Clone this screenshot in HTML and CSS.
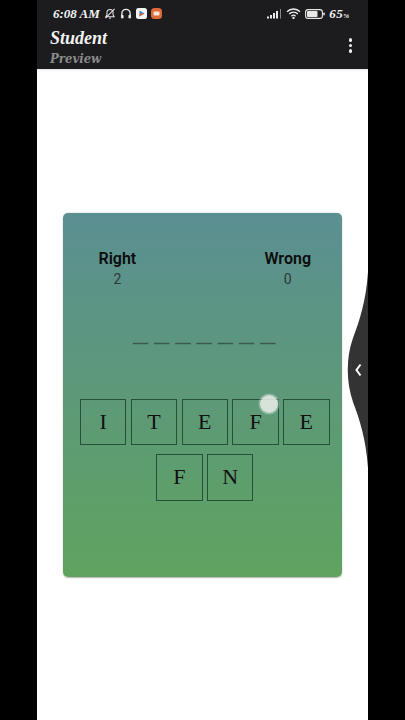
FILE: index.html
```html
<!DOCTYPE html>
<html lang="en">
<head>
<meta charset="utf-8">
<title>Student Preview</title>
<link rel="stylesheet" href="styles.css">
</head>
<body>
<div class="phone">
  <header class="appbar">
    <div class="status">
      <div class="status-left">
        <span class="time">6:08 AM</span>
        <svg class="ic" width="12" height="13" viewBox="0 0 13 13" fill="none" stroke="#e8e8e8" stroke-width="1.1"><path d="M2 10h9L9.8 8V5.500a3.300 3.300 0 0 0-6.600 0V8z"/><path d="M5.400 11.500h2.200"/><path d="M1.500 11.500 11.500 1.500"/></svg>
        <svg class="ic" width="12" height="13" viewBox="0 0 13 13" fill="none" stroke="#f0f0f0" stroke-width="1.400"><path d="M2 10V6.500a4.500 4.500 0 0 1 9 0V10"/><path d="M1.500 8.500v3h2v-3zM9.500 8.500v3h2v-3z" fill="#f0f0f0" stroke-width=".6"/></svg>
        <svg class="ic" width="11" height="11" viewBox="0 0 11 11"><rect width="11" height="11" rx="2.500" fill="#f4f4f4"/><path d="M3.500 2.500 8.500 5.500 3.500 8.500z" fill="#3b82d6"/><path d="M3.500 5.500h5l-5 3z" fill="#e2672f"/></svg>
        <svg class="ic" width="11" height="11" viewBox="0 0 11 11"><rect width="11" height="11" rx="3.500" fill="#dd6a37"/><rect x="2.500" y="3.500" width="6" height="4" rx="1" fill="#f6e4d8"/></svg>
      </div>
      <div class="status-right">
        <svg width="15" height="10" viewBox="0 0 15 10" fill="#e8e8e8"><rect x="0" y="7.500" width="2" height="2"/><rect x="3" y="6" width="2" height="3.500"/><rect x="6" y="4" width="2" height="5.500"/><rect x="9" y="2" width="2" height="7.500"/><rect x="13" y="0" width="1" height="9.500" fill="#888"/></svg>
        <svg width="15" height="11" viewBox="0 0 15 11" fill="none" stroke="#eee" stroke-width="1.300"><path d="M1 3.800a9 9 0 0 1 13 0"/><path d="M3.200 6a6 6 0 0 1 8.600 0"/><path d="M5.400 8.200a3 3 0 0 1 4.200 0"/><circle cx="7.500" cy="10" r=".5" fill="#eee"/></svg>
        <svg class="battery" width="20" height="10" viewBox="0 0 20 10"><rect x=".6" y=".6" width="16.800" height="8.800" rx="2.500" fill="none" stroke="#e8e8e8" stroke-width="1.100"/><rect x="2" y="2" width="10.500" height="6" rx="1" fill="#e8e8e8"/><rect x="18.300" y="3.500" width="1.500" height="3" rx=".7" fill="#e8e8e8"/></svg>
        <span class="level">65<small>%</small></span>
      </div>
    </div>
    <div class="titlebar">
      <div class="titles">
        <div class="title">Student</div>
        <div class="subtitle">Preview</div>
      </div>
      <div class="menu"><i></i><i></i><i></i></div>
    </div>
  </header>

  <main class="card">
    <div class="scores">
      <div class="score"><div class="score-label">Right</div><div class="score-value">2</div></div>
      <div class="score"><div class="score-label">Wrong</div><div class="score-value">0</div></div>
    </div>
    <div class="word">_______</div>
    <div class="tiles">
      <div class="tile">I</div>
      <div class="tile">T</div>
      <div class="tile">E</div>
      <div class="tile">F</div>
      <div class="tile">E</div>
      <div class="tile">F</div>
      <div class="tile">N</div>
    </div>
  </main>

  <div class="touch"></div>
  <svg class="handle" width="23" height="196" viewBox="0 0 23 196"><path d="M23 0C21 30 14 50 8 66C1 85 1 110 8 130C14 146 21 166 23 196Z" fill="#333"/><path d="M15.500 92.500 11.500 98l4 5.500" fill="none" stroke="#fff" stroke-width="2"/></svg>
</div>
</body>
</html>
```
FILE: styles.css
```css
* { box-sizing: border-box; }
html, body { margin: 0; height: 100%; }
body { background: #000; overflow: hidden; }
.phone {
  position: relative;
  width: 331px;
  height: 720px;
  margin-left: 37px;
  background: #fff;
  overflow: visible;
}
.appbar {
  height: 69px;
  background: #1c1c1e;
  padding: 0 16px 0 13px;
  box-shadow: 0 1px 2px rgba(0, 0, 0, .12);
}
.status {
  display: flex;
  justify-content: space-between;
  align-items: center;
  height: 27px;
  padding: 0 3px 0 3px;
}
.status-left { display: flex; align-items: center; gap: 4px; }
.status-right { display: flex; align-items: center; gap: 4px; }
.time, .level {
  font: italic bold 13px "Liberation Serif", serif;
  color: #f5f5f5;
}
.level { letter-spacing: .4px; }
.level small { font-size: 7px; letter-spacing: 0; }
.titlebar {
  display: flex;
  justify-content: space-between;
  align-items: flex-start;
  padding-top: 1px;
}
.title {
  font: italic bold 18px/20px "Liberation Serif", serif;
  color: #f2f2f2;
}
.subtitle {
  font: italic bold 13px/15px "DejaVu Serif Condensed", "Liberation Serif", serif;
  color: #8b8b8b;
  margin-top: 3px;
}
.menu {
  display: flex;
  flex-direction: column;
  gap: 2px;
  padding-top: 10px;
}
.menu i {
  display: block;
  width: 3.500px;
  height: 3.500px;
  border-radius: 50%;
  background: #eee;
}
.card {
  width: 279px;
  height: 364px;
  margin: 144px 0 0 26px;
  padding-top: 36px;
  border-radius: 5px;
  background: linear-gradient(180deg, #5b8f92 0%, #5fa35f 100%);
  box-shadow: 0 .5px 1.500px rgba(0, 0, 0, .3);
}
.scores {
  display: flex;
  justify-content: space-between;
  padding: 0 31px 0 35.500px;
}
.score { text-align: center; font-family: Roboto, sans-serif; color: #0c0c0c; }
.score-label { font-size: 16px; font-weight: 600; line-height: 20px; }
.score-value { font-size: 14px; line-height: 20px; color: #2a3a38; }
.word {
  margin-top: 25px;
  padding-left: 70px;
  height: 34px;
  font: 30px/34px "Liberation Serif", serif;
  letter-spacing: 6.200px;
  color: #3a5a50;
  white-space: nowrap;
}
.tiles {
  display: flex;
  flex-wrap: wrap;
  justify-content: center;
  gap: 8.800px 4.400px;
  margin-top: 51px;
  padding: 0 8px 0 12.500px;
}
.tile {
  width: 46.400px;
  height: 46.400px;
  display: flex;
  align-items: center;
  justify-content: center;
  border: 1px solid #27503a;
  font: 22px "Liberation Serif", serif;
  color: #111;
}
.touch {
  position: absolute;
  left: 223px;
  top: 395px;
  width: 18px;
  height: 18px;
  border-radius: 50%;
  background: rgba(232, 236, 230, .88);
  box-shadow: 0 0 0 1.500px rgba(255, 255, 255, .3);
}
.handle {
  position: absolute;
  left: 308px;
  top: 272px;
}
```
